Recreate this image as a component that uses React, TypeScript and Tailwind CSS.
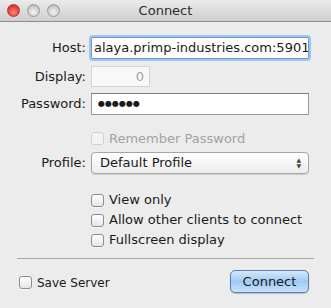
import React from "react";

const font = { fontFamily: '"DejaVu Sans", "Noto Sans", sans-serif' };

function Light({ red }: { red?: boolean }) {
  return (
    <span
      className={
        red
          ? "h-[13px] w-[13px] rounded-full border border-[#b03a33] bg-[radial-gradient(circle_at_50%_65%,#ff8a80_0%,#e8453a_55%,#a8261d_100%)]"
          : "h-[13px] w-[13px] rounded-full border border-[#9a9a9a] bg-[radial-gradient(circle_at_50%_65%,#f4f4f4_0%,#cfcfcf_55%,#a8a8a8_100%)]"
      }
    />
  );
}

function Check({ disabled, label }: { disabled?: boolean; label: string }) {
  return (
    <div className="flex items-center gap-[5px]">
      <span
        className={
          disabled
            ? "h-[13px] w-[13px] rounded-[3px] border border-[#cfcfcf] bg-[#f3f3f3]"
            : "h-[13px] w-[13px] rounded-[3px] border border-[#8e8e8e] bg-gradient-to-b from-[#ffffff] to-[#e6e6e6] shadow-[0_1px_0_rgba(255,255,255,0.6)]"
        }
      />
      <span className={disabled ? "text-[#a3a3a3]" : "text-[#1a1a1a]"}>{label}</span>
    </div>
  );
}

export default function App() {
  return (
    <div className="h-[308px] w-[331px] overflow-hidden bg-[#ececec] text-[13px] text-[#1a1a1a]" style={font}>
      {/* title bar */}
      <div className="relative flex h-[22px] items-center border-b border-[#8d8d8d] bg-gradient-to-b from-[#ebebeb] to-[#cfcfcf]">
        <div className="flex items-center gap-[7px] pl-[7px]">
          <Light red />
          <Light />
          <Light />
        </div>
        <div className="absolute inset-0 flex items-center justify-center text-[13px] text-[#2b2b2b]">Connect</div>
      </div>

      <div className="grid grid-cols-[86px_1fr] items-center gap-x-[5px] pr-[22px] pt-[15px]">
        <div className="text-right">Host:</div>
        <div className="h-[22px] overflow-hidden whitespace-nowrap rounded-[2px] border border-[#6d9bd6] bg-white pl-[2px] leading-[20px] shadow-[0_0_0_2px_#9ec3f0]">
          alaya.primp-industries.com:5901
        </div>

        <div className="mt-[7px] text-right">Display:</div>
        <div className="mt-[7px] h-[21px] w-[59px] border border-[#d4d4d4] bg-[#f8f8f8] pr-[5px] text-right leading-[19px] text-[#a0a0a0]">
          0
        </div>

        <div className="mt-[6px] text-right">Password:</div>
        <div className="mt-[6px] h-[22px] border border-[#9a9a9a] border-t-[#7c7c7c] bg-white pl-[6px] text-[8px] leading-[20px]">
          ●●●●●●
        </div>

        <div className="mt-[14px]" />
        <div className="mt-[14px] h-[16px]">
          <Check disabled label="Remember Password" />
        </div>

        <div className="mt-[7px] text-right">Profile:</div>
        <div className="mt-[7px] flex h-[22px] items-center justify-between rounded-[4px] border border-[#a5a5a5] bg-gradient-to-b from-[#ffffff] to-[#ececec] pl-[8px] pr-[7px] shadow-[0_1px_1px_rgba(0,0,0,0.12)]">
          <span>Default Profile</span>
          <span className="flex flex-col items-center text-[6px] leading-[6px] text-[#444]">
            <span>▲</span>
            <span>▼</span>
          </span>
        </div>

        <div className="mt-[18px]" />
        <div className="mt-[18px] flex flex-col gap-[4px] leading-[16px]">
          <Check label="View only" />
          <Check label="Allow other clients to connect" />
          <Check label="Fullscreen display" />
        </div>
      </div>

      <div className="mx-[17px] mt-[10px] h-px bg-[#a8a8a8]" />

      <div className="flex items-center justify-between pl-[19px] pr-[22px] pt-[11px]">
        <div className="pt-[2px] text-[12px]">
          <Check label="Save Server" />
        </div>
        <button className="h-[23px] w-[79px] rounded-[5px] border border-[#5a7eb0] bg-gradient-to-b from-[#d5e8fb] via-[#9fcaf3] to-[#c6e3fb] text-[13px] text-[#1a1a1a] shadow-[0_1px_1px_rgba(0,0,0,0.2)]">
          Connect
        </button>
      </div>
    </div>
  );
}
